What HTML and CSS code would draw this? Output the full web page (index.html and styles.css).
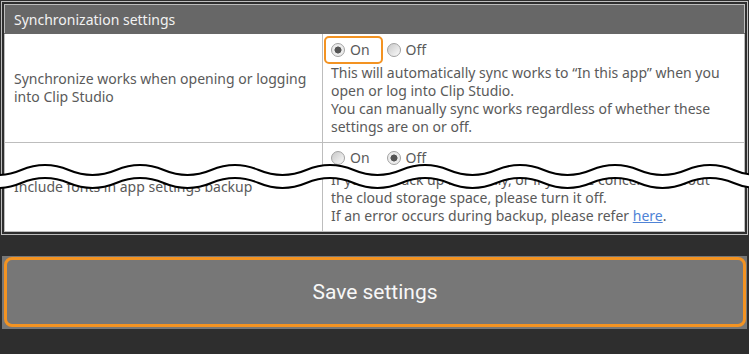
FILE: index.html
```html
<!DOCTYPE html>
<html lang="en">
<head>
  <meta charset="UTF-8" />
  <meta name="viewport" content="width=device-width, initial-scale=1.0"/>
  <title>Synchronization settings</title>
  <link rel="stylesheet" href="styles.css">
</head>
<body>
  <div class="page">
    <div class="frame">
      <table class="settings">
        <colgroup>
          <col class="col-label">
          <col>
        </colgroup>
        <tr>
          <th colspan="2">Synchronization settings</th>
        </tr>
        <tr class="row-sync">
          <td class="label">Synchronize works when opening or logging into Clip Studio</td>
          <td class="value">
            <div class="opts">
              <span class="opt focused"><span class="radio checked"></span>On</span>
              <span class="opt"><span class="radio"></span>Off</span>
            </div>
            <p>This will automatically sync works to “In this app” when you open or log into Clip Studio.<br>You can manually sync works regardless of whether these settings are on or off.</p>
          </td>
        </tr>
        <tr class="row-fonts">
          <td class="label">Include fonts in app settings backup</td>
          <td class="value">
            <div class="opts">
              <span class="opt"><span class="radio"></span>On</span>
              <span class="opt"><span class="radio checked"></span>Off</span>
            </div>
            <p>If you do back up manually, or if you are concerned about<br>the cloud storage space, please turn it off.<br>If an error occurs during backup, please refer <a href="#">here</a>.</p>
          </td>
        </tr>
      </table>
    </div>

    <!-- cut mark: the part of the table in between is left out -->
    <svg class="cut" width="749" height="34" viewBox="0 0 749 34">
      <defs>
        <path id="wave" d="M-73.75 11 Q-50 1 -26.25 11 T21.25 11 T68.75 11 T116.25 11 T163.75 11 T211.25 11 T258.75 11 T306.25 11 T353.75 11 T401.25 11 T448.75 11 T496.25 11 T543.75 11 T591.25 11 T638.75 11 T686.25 11 T733.75 11 T781.25 11"/>
      </defs>
      <use href="#wave" class="cut-band" transform="translate(0 6.5)"/>
      <use href="#wave" class="cut-line"/>
      <use href="#wave" class="cut-line" transform="translate(0 13)"/>
    </svg>

    <div class="save-bar">
      <button class="save">Save settings</button>
    </div>
  </div>
</body>
</html>
```

FILE: styles.css
```css
html, body {
  margin: 0;
  background: #2e2e2e;
}

body {
  font-family: "Noto Sans", sans-serif;
  font-size: 14px;
  color: #5a5a5a;
}

.page {
  position: relative;
  width: 749px;
  height: 354px;
  overflow: hidden;
}

.frame {
  margin: 1px 1px 0;
  padding: 2px;
  border: 1px solid #bdbdbd;
}

.settings {
  width: 100%;
  table-layout: fixed;
  border-collapse: collapse;
  border: 1px solid #bdbdbd;
  background: #fff;
}

.col-label {
  width: 318px;
}

.settings th {
  height: 28px;
  padding: 0 9px;
  background: #676767;
  color: #f2f2f2;
  font-weight: normal;
  text-align: left;
  border-bottom: 1px solid #676767;
}

.settings td {
  border: 1px solid #bdbdbd;
  vertical-align: top;
}

.settings td.label {
  padding: 0 9px;
  vertical-align: middle;
  line-height: 18px;
}

.settings td.value {
  padding: 1px 8px 6px 1px;
  line-height: 18px;
}

.value p {
  margin: 0 0 0 7px;
}

.value a {
  color: #4f83d6;
}

.opts {
  display: flex;
  gap: 2px;
  height: 29px;
  align-items: center;
}

.row-fonts .opts {
  height: 27px;
}

.opt {
  display: inline-flex;
  align-items: center;
  gap: 5px;
  box-sizing: border-box;
  height: 28px;
  padding: 0 11px 0 5px;
  border: 2px solid transparent;
  border-radius: 5px;
}

.opt + .opt {
  padding-left: 0;
}

.opt.focused {
  border-color: #f39322;
}

.radio {
  display: inline-block;
  width: 14px;
  height: 14px;
  box-sizing: border-box;
  border: 1px solid #a3a3a3;
  border-radius: 50%;
  background: linear-gradient(135deg, #c8c8c8, #fbfbfb);
}

.radio.checked {
  background: radial-gradient(circle, #555 0 3.2px, #ececec 3.8px);
}

.cut {
  position: absolute;
  left: 0;
  top: 159px;
}

.cut-band {
  fill: none;
  stroke: #fff;
  stroke-width: 13;
}

.cut-line {
  fill: none;
  stroke: #000;
  stroke-width: 2;
}

.save-bar {
  margin: 21px 2px 0;
  padding: 1px 1px 2px 2px;
  background: #777;
}

.save {
  display: block;
  width: 100%;
  height: 70px;
  border: 3px solid #f39322;
  border-radius: 8px;
  background: #777;
  color: #f7f7f7;
  font-family: Roboto, sans-serif;
  font-size: 21px;
}
```
